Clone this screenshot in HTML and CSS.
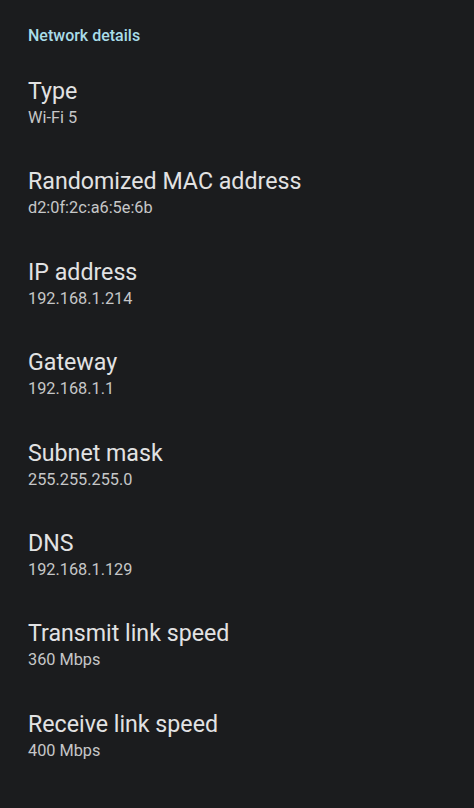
FILE: index.html
```html
<!DOCTYPE html>
<html>
<head>
<meta charset="utf-8">
<link rel="stylesheet" href="styles.css">
</head>
<body>
<main class="page">
  <h2 class="section-title">Network details</h2>
  <ul class="list">
    <li class="item"><div class="title">Type</div><div class="value">Wi-Fi 5</div></li>
    <li class="item"><div class="title">Randomized MAC address</div><div class="value">d2:0f:2c:a6:5e:6b</div></li>
    <li class="item"><div class="title">IP address</div><div class="value">192.168.1.214</div></li>
    <li class="item"><div class="title">Gateway</div><div class="value">192.168.1.1</div></li>
    <li class="item"><div class="title">Subnet mask</div><div class="value">255.255.255.0</div></li>
    <li class="item"><div class="title">DNS</div><div class="value">192.168.1.129</div></li>
    <li class="item"><div class="title">Transmit link speed</div><div class="value">360 Mbps</div></li>
    <li class="item"><div class="title">Receive link speed</div><div class="value">400 Mbps</div></li>
  </ul>
</main>
</body>
</html>
```
FILE: styles.css
```css
html, body {
  margin: 0;
  padding: 0;
  background: #1b1c1e;
  height: 100%;
}
body {
  font-family: Roboto, "Liberation Sans", sans-serif;
}
.page {
  padding: 26px 28px 0 28px;
}
.section-title {
  margin: 0;
  font-size: 16px;
  line-height: 20px;
  font-weight: 500;
  color: #a9dde8;
}
.list {
  list-style: none;
  margin: 30px 0 0 0;
  padding: 0;
}
.item {
  height: 90.4px;
}
.title {
  font-size: 23.2px;
  line-height: 31px;
  color: #e2e2e3;
}
.value {
  font-size: 16.3px;
  line-height: 22px;
  color: #c6c7c8;
}
```
